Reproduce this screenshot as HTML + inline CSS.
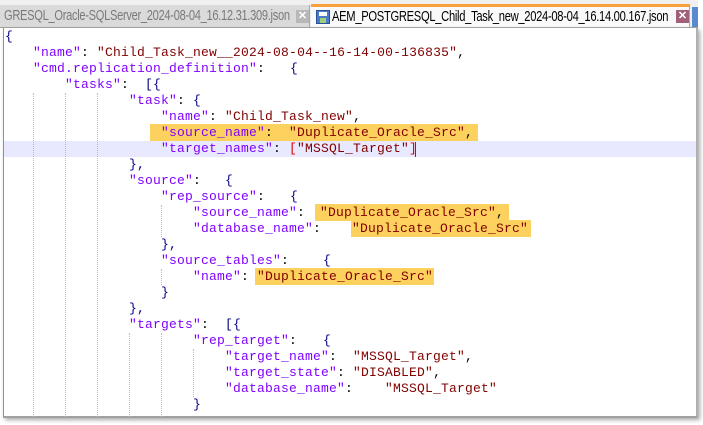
<!DOCTYPE html>
<html><head><style>
body{margin:0;width:703px;height:425px;background:#fff;position:relative;overflow:hidden;font-family:"Liberation Mono",monospace;}
.tabbar{position:absolute;left:0;top:0;width:698px;height:27px;background:#f0f0f0;border-bottom:1px solid #a0a0a0;overflow:hidden;}
.tab1{position:absolute;left:0;top:5px;width:309px;height:22px;background:#dadada;border-right:1px solid #a8a8a8;font:15px "Liberation Sans",sans-serif;color:#7a7a7a;line-height:22px;letter-spacing:-0.4px;white-space:nowrap;overflow:hidden;}
.tab2{position:absolute;left:311px;top:4px;width:378px;height:20px;background:#fafafa;border-top:3px solid #f7a13a;border-right:1px solid #a8a8a8;font:15px "Liberation Sans",sans-serif;color:#000;line-height:20px;letter-spacing:-0.4px;white-space:nowrap;overflow:hidden;}
.x{position:absolute;width:13px;height:13px;color:#fff;font:bold 11px "Liberation Sans";text-align:center;line-height:13px;letter-spacing:0}
.content{position:absolute;left:3px;top:28px;width:692px;height:388px;border-left:1px solid #909090;border-right:2px solid #b0b0b0;border-bottom:2px solid #a0a0a0;box-shadow:2px 2px 4px #aaa;background:#fff;}
.l{position:absolute;height:16px;line-height:16px;font-size:13px;letter-spacing:0.2px;white-space:pre;}
.k{color:#8000ff}.s{color:#800000}.p{color:#000}.b{color:#000080}
.hl{position:absolute;height:17px;background:#fdd15e;}
.g{position:absolute;width:0;border-left:1px dotted #bbb;}
</style></head><body>
<div class="tabbar">
 <div class="tab1"><span style="position:absolute;left:4px;transform:scaleX(0.74);transform-origin:left">GRESQL_Oracle-SQLServer_2024-08-04_16.12.31.309.json</span><div class="x" style="left:296px;top:5px;background:#b8b8b8">✕</div></div>
 <div class="tab2">
  <div style="position:absolute;left:5px;top:3px;width:12px;height:12px;background:#4a7cc8;border:1px solid #2a5098"><div style="position:absolute;left:2px;top:1px;width:8px;height:4px;background:#fff"></div><div style="position:absolute;left:3px;top:7px;width:6px;height:5px;background:#9cd07a"></div></div>
  <span style="position:absolute;left:21px;top:0;transform:scaleX(0.745);transform-origin:left">AEM_POSTGRESQL_Child_Task_new_2024-08-04_16.14.00.167.json</span>
  <div class="x" style="left:365px;top:3px;background:#a0607a">✕</div>
 </div>
 <div style="position:absolute;left:692px;top:7px;width:6px;height:20px;background:#5a8ad0"></div>
</div>
<div class="content"></div>
<div style="position:absolute;left:4px;top:141px;width:692px;height:16px;background:#e8e8ff"></div>
<div class="hl" style="left:150px;top:124px;width:328px"></div>
<div class="hl" style="left:315px;top:204px;width:194px"></div>
<div class="hl" style="left:351px;top:220px;width:180px"></div>
<div class="hl" style="left:255px;top:268px;width:179px"></div>
<div class="g" style="left:33px;top:93px;height:324px"></div>
<div class="g" style="left:65px;top:93px;height:324px"></div>
<div class="g" style="left:97px;top:93px;height:324px"></div>
<div class="g" style="left:129px;top:333px;height:84px"></div>
<div class="g" style="left:161px;top:333px;height:84px"></div>
<div class="g" style="left:161px;top:205px;height:32px"></div>
<div class="g" style="left:161px;top:269px;height:16px"></div>
<div class="g" style="left:193px;top:349px;height:48px"></div>

<div class="l b" style="left:5px;top:29px">{</div>
<div class="l" style="left:33px;top:45px"><span class="k">"name"</span><span class="p">: </span><span class="s">"Child_Task_new__2024-08-04--16-14-00-136835"</span><span class="p">,</span></div>
<div class="l" style="left:33px;top:61px"><span class="k">"cmd.replication_definition"</span><span class="p">:</span></div>
<div class="l b" style="left:290px;top:61px">{</div>
<div class="l" style="left:65px;top:77px"><span class="k">"tasks"</span><span class="p">:</span></div>
<div class="l b" style="left:145px;top:77px">[{</div>
<div class="l" style="left:129px;top:93px"><span class="k">"task"</span><span class="p">: </span><span class="b">{</span></div>
<div class="l" style="left:161px;top:109px"><span class="k">"name"</span><span class="p">: </span><span class="s">"Child_Task_new"</span><span class="p">,</span></div>
<div class="l" style="left:161px;top:125px"><span class="k">"source_name"</span><span class="p">:</span></div>
<div class="l" style="left:289px;top:125px"><span class="s">"Duplicate_Oracle_Src"</span><span class="p">,</span></div>
<div class="l" style="left:161px;top:141px"><span class="k">"target_names"</span><span class="p">:</span></div>
<div class="l" style="left:289px;top:141px"><span style="color:#e00000">[</span><span class="s">"MSSQL_Target"</span><span style="color:#e00000">]</span></div>
<div style="position:absolute;left:415px;top:142px;width:1px;height:15px;background:#8000ff"></div>
<div class="l b" style="left:129px;top:157px">},</div>
<div class="l" style="left:129px;top:173px"><span class="k">"source"</span><span class="p">:</span></div>
<div class="l b" style="left:225px;top:173px">{</div>
<div class="l" style="left:161px;top:189px"><span class="k">"rep_source"</span><span class="p">:</span></div>
<div class="l b" style="left:290px;top:189px">{</div>
<div class="l" style="left:193px;top:205px"><span class="k">"source_name"</span><span class="p">:</span></div>
<div class="l" style="left:320px;top:205px"><span class="s">"Duplicate_Oracle_Src"</span><span class="p">,</span></div>
<div class="l" style="left:193px;top:221px"><span class="k">"database_name"</span><span class="p">:</span></div>
<div class="l" style="left:352px;top:221px"><span class="s">"Duplicate_Oracle_Src"</span></div>
<div class="l b" style="left:161px;top:237px">},</div>
<div class="l" style="left:161px;top:253px"><span class="k">"source_tables"</span><span class="p">:</span></div>
<div class="l b" style="left:323px;top:253px">{</div>
<div class="l" style="left:193px;top:269px"><span class="k">"name"</span><span class="p">:</span></div>
<div class="l" style="left:257px;top:269px"><span class="s">"Duplicate_Oracle_Src"</span></div>
<div class="l b" style="left:161px;top:285px">}</div>
<div class="l b" style="left:129px;top:301px">},</div>
<div class="l" style="left:129px;top:317px"><span class="k">"targets"</span><span class="p">:</span></div>
<div class="l b" style="left:225px;top:317px">[{</div>
<div class="l" style="left:193px;top:333px"><span class="k">"rep_target"</span><span class="p">:</span></div>
<div class="l b" style="left:323px;top:333px">{</div>
<div class="l" style="left:225px;top:349px"><span class="k">"target_name"</span><span class="p">:</span></div>
<div class="l" style="left:353px;top:349px"><span class="s">"MSSQL_Target"</span><span class="p">,</span></div>
<div class="l" style="left:225px;top:365px"><span class="k">"target_state"</span><span class="p">: </span><span class="s">"DISABLED"</span><span class="p">,</span></div>
<div class="l" style="left:225px;top:381px"><span class="k">"database_name"</span><span class="p">:</span></div>
<div class="l" style="left:385px;top:381px"><span class="s">"MSSQL_Target"</span></div>
<div class="l b" style="left:193px;top:397px">}</div>
</body></html>
